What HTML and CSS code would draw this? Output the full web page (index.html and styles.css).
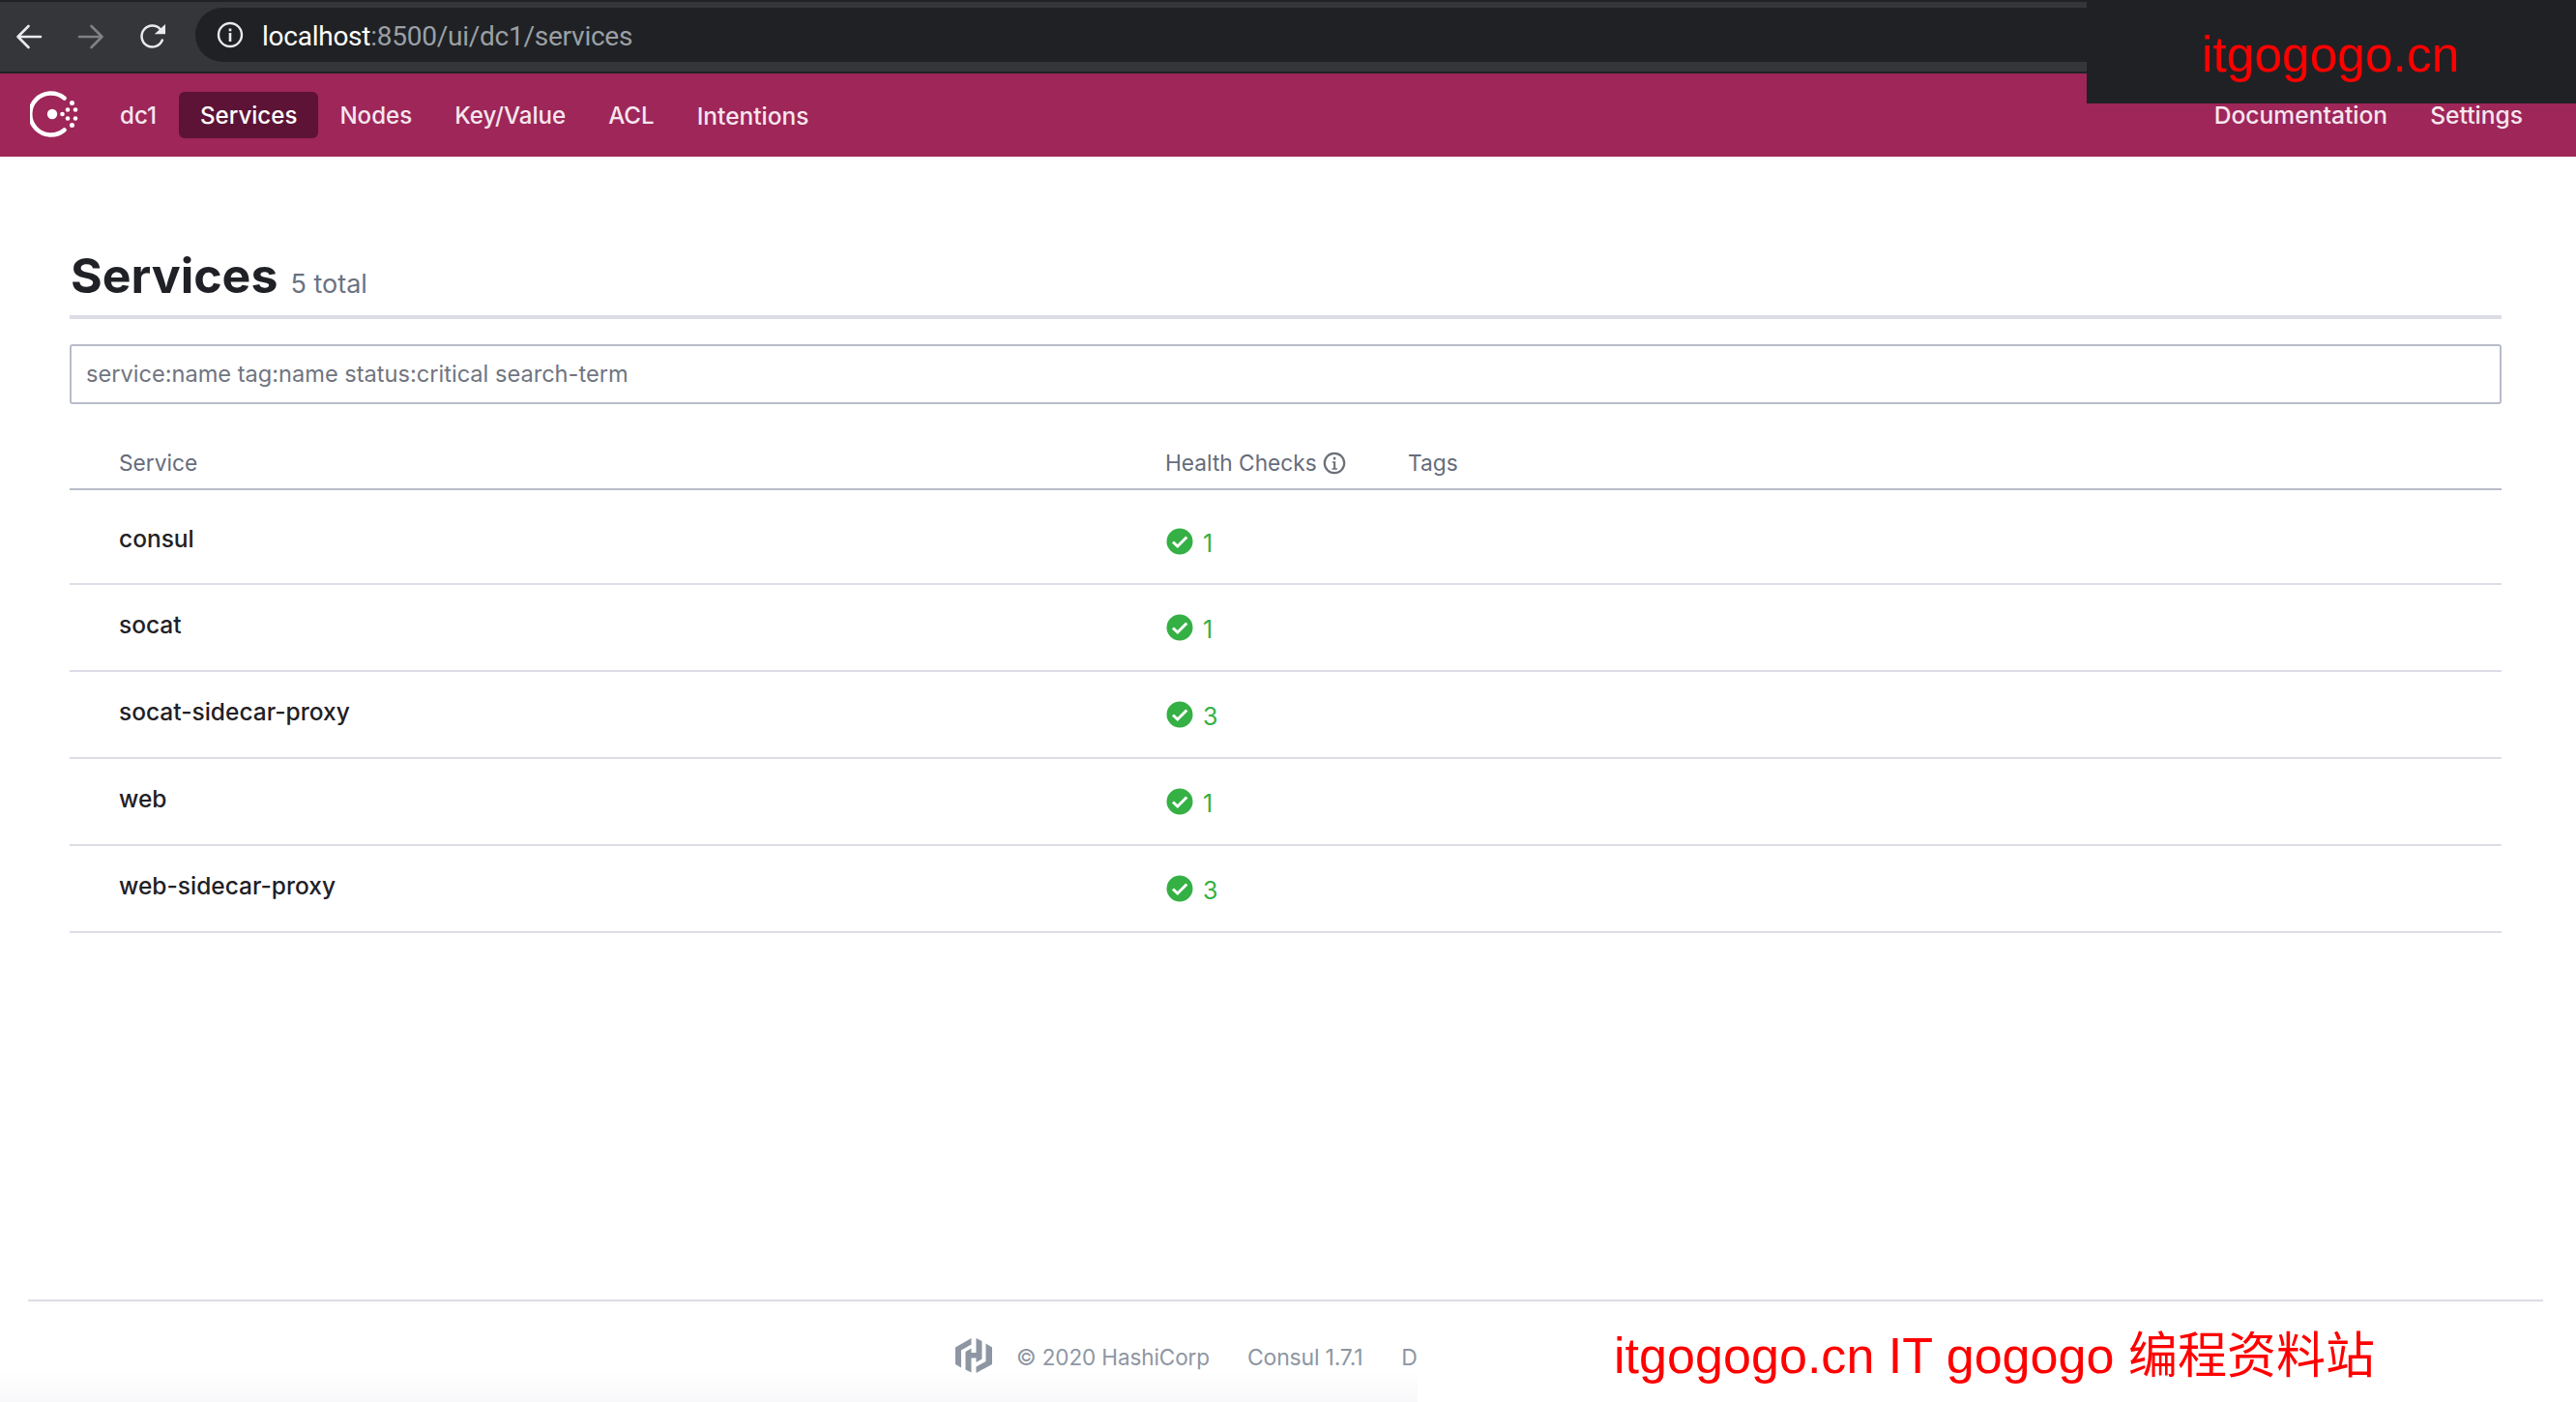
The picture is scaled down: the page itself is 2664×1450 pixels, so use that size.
FILE: index.html
```html
<!DOCTYPE html>
<html lang="en">
<head>
<meta charset="utf-8">
<title>Services - Consul</title>
<link rel="stylesheet" href="styles.css">
</head>
<body>
<div class="browser-bar">
  <div class="browser-buttons">
    <svg class="bicon" viewBox="0 0 28 28"><path d="M26 14H3M13.5 3 2.5 14l11 11" fill="none" stroke="#e8eaed" stroke-width="2.6" stroke-linecap="round" stroke-linejoin="round"/></svg>
    <svg class="bicon" viewBox="0 0 28 28"><path d="M2 14h23M14.500 3l11 11-11 11" fill="none" stroke="#7f8185" stroke-width="2.600" stroke-linecap="round" stroke-linejoin="round"/></svg>
    <svg class="bicon" viewBox="0 0 28 28"><path d="M23.800 17.500A11 11 0 1 1 21.800 6.300" fill="none" stroke="#e8eaed" stroke-width="2.500" stroke-linecap="round"/><path d="M15.800 11.200 27 11.200 27 1z" fill="#e8eaed"/></svg>
  </div>
  <div class="omnibox">
    <svg class="omni-info" viewBox="0 0 28 28"><circle cx="14" cy="14" r="12" fill="none" stroke="#e8eaed" stroke-width="2.400"/><rect x="12.700" y="12" width="2.600" height="9" fill="#e8eaed"/><rect x="12.700" y="7.500" width="2.600" height="2.800" fill="#e8eaed"/></svg>
    <span class="url"><span class="url-host">localhost</span>:8500/ui/dc1/services</span>
  </div>
</div>
<nav class="topnav">
  <svg class="consul-logo" viewBox="0 0 52 52"><path d="M35.500 9.500A21.500 21.500 0 1 0 35.500 42.500" fill="none" stroke="#fff" stroke-width="4.500" stroke-linecap="round"/><circle cx="23" cy="26" r="5.200" fill="#fff"/><circle cx="33.500" cy="26" r="2.300" fill="#fff"/><circle cx="43.500" cy="14.500" r="2.500" fill="#fff"/><circle cx="39" cy="21.500" r="2.300" fill="#fff"/><circle cx="47" cy="21.500" r="2.300" fill="#fff"/><circle cx="39" cy="30.500" r="2.300" fill="#fff"/><circle cx="47" cy="30.500" r="2.300" fill="#fff"/><circle cx="43.500" cy="37.500" r="2.500" fill="#fff"/></svg>
  <a class="nav-item nav-dc">dc1</a>
  <a class="nav-item is-active">Services</a>
  <a class="nav-item">Nodes</a>
  <a class="nav-item">Key/Value</a>
  <a class="nav-item">ACL</a>
  <a class="nav-item nav-last">Intentions</a>
  <div class="nav-right">
    <a class="nav-item nav-wide">Documentation</a>
    <a class="nav-item nav-wide">Settings</a>
  </div>
</nav>
<main class="content">
  <header class="page-head">
    <h1>Services</h1><span class="total">5 total</span>
  </header>
  <div class="search">service:name tag:name status:critical search-term</div>
  <table class="services">
    <thead>
      <tr>
        <th class="col-name">Service</th>
        <th class="col-health">Health Checks <svg class="th-info" viewBox="0 0 24 24"><circle cx="12" cy="12" r="10.200" fill="none" stroke="#6b6f78" stroke-width="2.200"/><path d="M9.800 10.200h3.400v7h1.700v1.600H9.500v-1.600h1.600v-5.400H9.800zM10.900 5.800h2.400v2.700h-2.400z" fill="#6b6f78"/></svg></th>
        <th>Tags</th>
      </tr>
    </thead>
    <tbody>
      <tr class="first"><td class="name">consul</td><td><span class="check"><svg class="ok" viewBox="0 0 28 28"><circle cx="14" cy="14" r="13.500" fill="#35b044"/><path d="M7 14.500l4.800 4.500 9.500-9.500" fill="none" stroke="#fff" stroke-width="3"/></svg>1</span></td><td></td></tr>
      <tr><td class="name">socat</td><td><span class="check"><svg class="ok" viewBox="0 0 28 28"><circle cx="14" cy="14" r="13.500" fill="#35b044"/><path d="M7 14.500l4.800 4.500 9.500-9.500" fill="none" stroke="#fff" stroke-width="3"/></svg>1</span></td><td></td></tr>
      <tr><td class="name">socat-sidecar-proxy</td><td><span class="check"><svg class="ok" viewBox="0 0 28 28"><circle cx="14" cy="14" r="13.500" fill="#35b044"/><path d="M7 14.500l4.800 4.500 9.500-9.500" fill="none" stroke="#fff" stroke-width="3"/></svg>3</span></td><td></td></tr>
      <tr><td class="name">web</td><td><span class="check"><svg class="ok" viewBox="0 0 28 28"><circle cx="14" cy="14" r="13.500" fill="#35b044"/><path d="M7 14.500l4.800 4.500 9.500-9.500" fill="none" stroke="#fff" stroke-width="3"/></svg>1</span></td><td></td></tr>
      <tr><td class="name">web-sidecar-proxy</td><td><span class="check"><svg class="ok" viewBox="0 0 28 28"><circle cx="14" cy="14" r="13.500" fill="#35b044"/><path d="M7 14.500l4.800 4.500 9.500-9.500" fill="none" stroke="#fff" stroke-width="3"/></svg>3</span></td><td></td></tr>
    </tbody>
  </table>
</main>
<footer class="footer">
  <div class="footer-inner">
    <svg class="hashi" viewBox="0 0 38 36"><path d="M16.500 0 0 9.500v17.500l6 3.500V12.500L16.500 6.500zM21.500 0v15h-5v-4.500l-6 3.500v18.500l6 3V20.500h5V25l6-3.500V3z" fill="#8e96a3"/><path d="M31.500 5.500 38 9.500V27L21.500 36v-6.500l10-5.500z" fill="#8e96a3"/></svg>
    <span class="copy">© 2020 HashiCorp</span>
    <span class="ver">Consul 1.7.1</span>
    <span class="doc">D</span>
  </div>
</footer>
<div class="mark-top"><span>itgogogo.cn</span></div>
<div class="mark-bottom">itgogogo.cn IT gogogo <span class="mark-cjk">编程资料站</span></div>
</body>
</html>
```
FILE: styles.css
```css
* { box-sizing: border-box; }
html, body { margin: 0; height: 100%; }
body {
  position: relative;
  width: 2664px;
  height: 1450px;
  overflow: hidden;
  display: flex;
  flex-direction: column;
  background: #fff;
  font-family: Inter, "Liberation Sans", sans-serif;
  color: #1f2126;
}
.browser-bar {
  height: 76px;
  flex: none;
  display: flex;
  align-items: center;
  background: #35363a;
  border-top: 2px solid #202124;
  border-bottom: 2px solid #202124;
  padding-left: 16px;
}
.browser-buttons { display: flex; gap: 36px; width: 186px; flex: none; }
.bicon { width: 28px; height: 28px; }
.omnibox {
  flex: 1;
  height: 56px;
  margin-top: -4px;
  background: #202124;
  border-radius: 28px 0 0 28px;
  display: flex;
  align-items: center;
  padding-left: 22px;
}
.omni-info { width: 28px; height: 28px; flex: none; }
.url { margin-left: 19px; padding-top: 2px; font-family: Roboto, sans-serif; font-size: 28px; color: #9aa0a6; letter-spacing: -0.25px; }
.url-host { color: #fff; }
.topnav {
  height: 86px;
  flex: none;
  display: flex;
  align-items: center;
  background: #9e2659;
  padding-left: 31px;
}
.consul-logo { width: 52px; height: 52px; flex: none; margin-top: -2px; margin-right: 19px; }
.nav-item {
  display: block;
  padding: 0 22px;
  height: 48px;
  line-height: 50px;
  font-size: 24.100px;
  font-weight: 500;
  color: #f5e6ee;
  border-radius: 6px;
  margin-top: -1px;
}
.nav-last { font-size: 24.500px; }
.nav-wide { font-size: 24.600px; line-height: 48px; }
.nav-dc { padding-right: 23px; }
.is-active { background: #5c1335; color: #fff; }
.nav-right { margin-left: auto; display: flex; padding-right: 33px; }
.content { flex: 1; padding: 0 77px 0 72px; }
.page-head {
  height: 168px;
  padding-top: 93px;
  border-bottom: 4px solid #dcdde6;
  display: flex;
  align-items: baseline;
  gap: 13px;
  padding-left: 1px;
}
.page-head h1 { margin: 0; font-size: 50px; line-height: 60px; font-weight: 700; color: #1f2126; }
.total { font-size: 27px; color: #6b7282; }
.search {
  margin-top: 26px;
  height: 62px;
  border: 2px solid #b8bcca;
  border-radius: 3px;
  padding-left: 15px;
  line-height: 58px;
  font-size: 23.600px;
  color: #70757f;
}
.services { width: 100%; margin-top: 25px; border-collapse: collapse; table-layout: fixed; }
.services th {
  height: 63px;
  text-align: left;
  font-weight: 400;
  font-size: 22.700px;
  color: #666c7b;
  border-bottom: 2px solid #b8bcca;
  padding: 8px 0 0 0;
  vertical-align: middle;
}
.services th.col-name { width: 1133px; padding-left: 51px; }
.services th.col-health { width: 251px; }
.th-info { width: 24px; height: 24px; vertical-align: -4px; }
.services td { height: 90px; border-bottom: 2px solid #dcdde6; padding: 0; vertical-align: middle; }
.services .first td { height: 98px; padding-top: 10px; }
.services td.name { padding-left: 51px; font-size: 24.500px; font-weight: 500; padding-bottom: 6px; }
.services .first td.name { padding-top: 3px; padding-bottom: 0; }
.check { display: flex; align-items: center; gap: 10px; font-size: 25px; color: #35b044; padding-left: 1px; padding-top: 3px; }
.ok { width: 28px; height: 28px; flex: none; margin-top: -4px; }
.footer {
  height: 106px;
  flex: none;
  padding: 0 34px 0 29px;
  background: linear-gradient(to bottom, #fff 70%, #f8f8fa 100%) no-repeat 0 0 / 1466px 100%;
}
.footer-inner {
  height: 100%;
  border-top: 2px solid #dcdde6;
  display: flex;
  align-items: flex-start;
  padding-left: 959px;
  padding-top: 38px;
  font-size: 23px;
  color: #8e96a3;
}
.hashi { width: 38px; height: 36px; flex: none; }
.copy { margin-left: 25px; margin-top: 6px; font-size: 22.500px; letter-spacing: -0.1px; }
.ver { margin-left: 39px; margin-top: 6px; letter-spacing: -0.2px; }
.doc { margin-left: 40px; margin-top: 6px; }
.mark-top {
  position: absolute;
  top: 0;
  left: 2158px;
  right: 0;
  height: 107px;
  background: #202124;
  padding-left: 119px;
  font-family: "Liberation Sans", sans-serif;
  font-size: 51.500px;
  line-height: 113px;
  color: #f00;
}
.mark-bottom {
  position: absolute;
  left: 1669px;
  top: 1369px;
  font-family: "Liberation Sans", "Noto Sans CJK SC", sans-serif;
  font-size: 52.100px;
  line-height: 66px;
  color: #f00;
  white-space: nowrap;
}
.mark-cjk { font-size: 51px; }
```
